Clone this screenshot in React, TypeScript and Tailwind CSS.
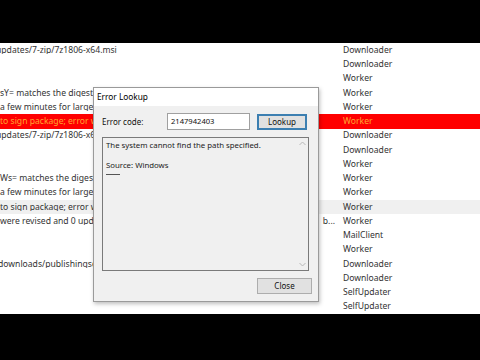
import React from "react";

const rows: { left: string; right: string; kind?: "red" | "gray"; shift?: number; tail?: string }[] = [
  { left: "updates/7-zip/7z1806-x64.msi", right: "Downloader", shift: -4 },
  { left: "", right: "Downloader" },
  { left: "", right: "Worker" },
  { left: "sY= matches the digest of the installer", right: "Worker" },
  { left: "a few minutes for large downloads to", right: "Worker" },
  { left: "to sign package; error was returned", right: "Worker", kind: "red" },
  { left: "updates/7-zip/7z1806-x64.msi", right: "Downloader", shift: -4 },
  { left: "", right: "Downloader" },
  { left: "", right: "Worker" },
  { left: "Ws= matches the digest of the installer", right: "Worker" },
  { left: "a few minutes for large downloads to", right: "Worker" },
  { left: "to sign package; error was returned", right: "Worker", kind: "gray" },
  { left: "were revised and 0 updates were declined, 0 skipped and the remaining ones are being processed now", right: "Worker", tail: "b..." },
  { left: "", right: "MailClient" },
  { left: "", right: "Worker" },
  { left: "downloads/publishingservice/result", right: "Downloader", shift: -2 },
  { left: "", right: "Downloader" },
  { left: "", right: "SelfUpdater" },
  { left: "", right: "SelfUpdater" },
];

export default function App() {
  return (
    <div
      className="w-[480px] h-[360px] bg-black flex flex-col overflow-hidden"
      style={{ fontFamily: '"Noto Sans", "Open Sans", sans-serif' }}
    >
      <div className="h-[43px] shrink-0 bg-black" />
      <div className="relative h-[271px] shrink-0 bg-white flex flex-col">
        {rows.map((r, i) => (
          <div
            key={i}
            className={
              "flex h-[14.26px] items-center text-[8.6px] leading-none " +
              (r.kind === "red"
                ? "bg-[#ff0000] text-[#ffa530]"
                : r.kind === "gray"
                ? "bg-[#f0f0f0] text-[#333]"
                : "text-[#333]")
            }
          >
            <div className="w-[336px] shrink-0 flex items-center overflow-hidden whitespace-nowrap">
              <div className="w-[300px] shrink-0 overflow-hidden">
                <span style={{ marginLeft: r.shift ?? 0 }}>{r.left}</span>
              </div>
              {r.tail && <span className="ml-auto pr-[1px]">{r.tail}</span>}
            </div>
            <div className="pl-[7px] whitespace-nowrap">{r.right}</div>
          </div>
        ))}

        <div className="absolute left-[93px] top-[44px] w-[226px] h-[215px] border border-[#9a9a9a] bg-[#f0f0f0] shadow-[1px_2px_4px_rgba(0,0,0,0.25)] flex flex-col text-[8px] text-[#111]">
          <div className="h-[18px] shrink-0 bg-white flex items-center pl-[3px] text-[8.3px] text-black">
            Error Lookup
          </div>
          <div className="flex flex-col pl-[8px] pt-[7px]">
            <div className="flex items-center h-[17px]">
              <div className="w-[65px] shrink-0">Error code:</div>
              <div className="w-[83px] h-[17px] shrink-0 bg-white border border-[#a0a0a0] flex items-center pl-[3px] text-[7.6px]">
                2147942403
              </div>
              <div className="ml-[7px] w-[50px] h-[16px] shrink-0 bg-[#e1e1e1] border-2 border-[#3c7fb1] flex items-center justify-center text-[8px]">
                Lookup
              </div>
            </div>
            <div className="mt-[7px] w-[207px] h-[134px] border border-[#7a7a7a] bg-[#f0f0f0] flex">
              <div className="flex-1 pl-[3px] pt-[2px] text-[7.8px] text-[#222] flex flex-col">
                <div className="h-[12px] flex items-center">The system cannot find the path specified.</div>
                <div className="h-[8px]" />
                <div className="h-[12px] flex items-center">Source: Windows</div>
                <div className="mt-[2px] w-[14px] h-px bg-[#555]" />
              </div>
              <div className="w-[12px] shrink-0 bg-[#f0f0f0] flex flex-col items-center justify-between py-[3px]">
                <svg width="7" height="5" viewBox="0 0 7 5">
                  <path d="M0.5 4 L3.5 1 L6.5 4" fill="none" stroke="#b8b8b8" strokeWidth="1" />
                </svg>
                <svg width="7" height="5" viewBox="0 0 7 5">
                  <path d="M0.5 1 L3.5 4 L6.5 1" fill="none" stroke="#b8b8b8" strokeWidth="1" />
                </svg>
              </div>
            </div>
            <div className="mt-[7px] self-end mr-[6px] w-[55px] h-[16px] bg-[#e1e1e1] border border-[#adadad] flex items-center justify-center text-[8px]">
              Close
            </div>
          </div>
        </div>
      </div>
      <div className="flex-1 bg-black" />
    </div>
  );
}
